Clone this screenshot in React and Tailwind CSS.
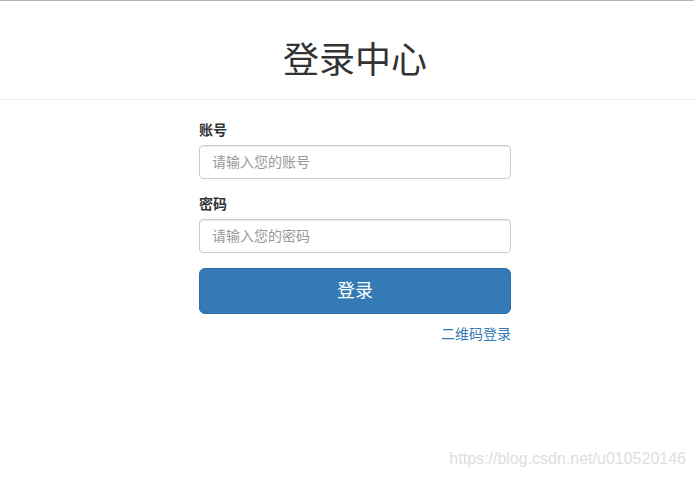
export default function App() {
  const cjk = { fontFamily: '"Helvetica Neue", "Liberation Sans", "Noto Sans CJK SC", sans-serif' };

  return (
    <div className="relative min-h-screen bg-white text-[#333] border-t border-[#b3b3b3] pl-[16px]" style={cjk}>
      {/* Header */}
      <div className="pt-[40px] pb-[18px] border-b border-[#eee] text-center -ml-[16px] pl-[16px]">
        <h1 className="text-[36px] leading-[40px] font-normal text-[#333]">登录中心</h1>
      </div>

      {/* Form */}
      <form className="w-[312px] mx-auto pt-[20px]" onSubmit={(e) => e.preventDefault()}>
        <div className="mb-[15px]">
          <label className="block text-[14px] leading-[20px] font-bold mb-[5px]">账号</label>
          <input
            type="text"
            placeholder="请输入您的账号"
            className="block w-full h-[34px] px-[12px] text-[14px] border border-[#ccc] rounded-[4px] shadow-[inset_0_1px_1px_rgba(0,0,0,0.075)] placeholder:text-[#999] outline-none"
          />
        </div>
        <div className="mb-[15px]">
          <label className="block text-[14px] leading-[20px] font-bold mb-[5px]">密码</label>
          <input
            type="password"
            placeholder="请输入您的密码"
            className="block w-full h-[34px] px-[12px] text-[14px] border border-[#ccc] rounded-[4px] shadow-[inset_0_1px_1px_rgba(0,0,0,0.075)] placeholder:text-[#999] outline-none"
          />
        </div>
        <button
          type="submit"
          className="block w-full h-[46px] bg-[#337ab7] border border-[#2e6da4] rounded-[6px] text-white text-[18px]"
        >
          登录
        </button>
        <div className="mt-[10px] text-right text-[14px] leading-[20px]">
          <a href="#" className="text-[#337ab7]">二维码登录</a>
        </div>
      </form>

      {/* Watermark */}
      <div
        className="absolute right-[8px] top-[448px] text-[16px] leading-[20px] text-[#dedede]"
        style={{ fontFamily: '"Liberation Sans", Arial, sans-serif' }}
      >
        https://blog.csdn.net/u010520146
      </div>
    </div>
  );
}
